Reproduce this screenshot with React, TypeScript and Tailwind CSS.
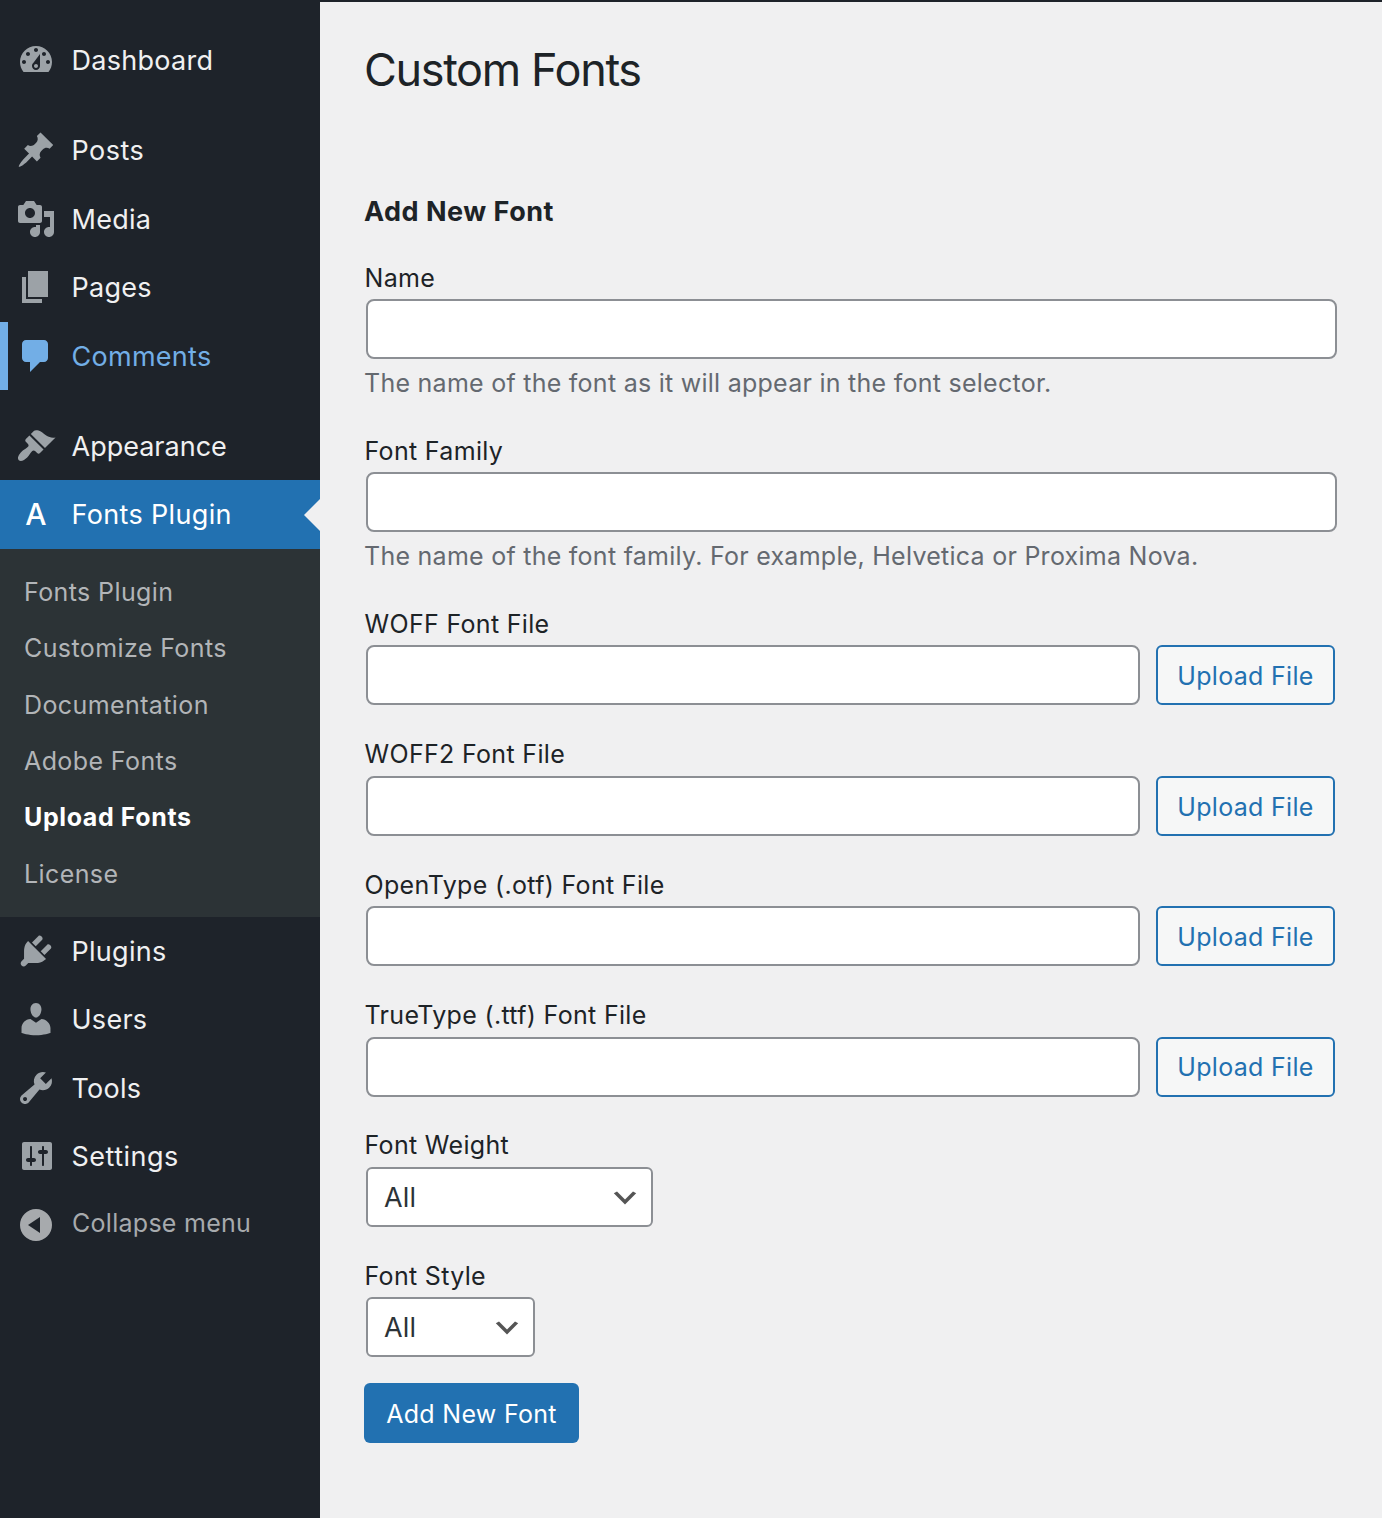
import { useState } from 'react';
import clsx from 'clsx';

interface MenuItem {
  label: string;
  icon: string;
  tracking?: string;
}

const ICONS: Record<string, string> = {
  dashboard: 'M3.76 16h12.48c1.1-1.37 1.76-3.11 1.76-5 0-4.42-3.58-8-8-8s-8 3.58-8 8c0 1.89.66 3.63 1.76 5zM10 4c.55 0 1 .45 1 1s-.45 1-1 1-1-.45-1-1 .45-1 1-1zM6 6c.55 0 1 .45 1 1s-.45 1-1 1-1-.45-1-1 .45-1 1-1zm8 0c.55 0 1 .45 1 1s-.45 1-1 1-1-.45-1-1 .45-1 1-1zm-5.37 5.55L12 7v6c0 1.1-.9 2-2 2s-2-.9-2-2c0-.57.24-1.08.63-1.45zM4 10c.55 0 1 .45 1 1s-.45 1-1 1-1-.45-1-1 .45-1 1-1zm12 0c.55 0 1 .45 1 1s-.45 1-1 1-1-.45-1-1 .45-1 1-1zm-5 3c0-.55-.45-1-1-1s-1 .45-1 1 .45 1 1 1 1-.45 1-1z',
  posts: 'M10.44 3.02l1.82-1.82 6.36 6.35-1.83 1.82c-1.05-.68-2.48-.57-3.41.36l-.75.75c-.92.93-1.04 2.35-.35 3.41l-1.83 1.82-2.41-2.41-2.8 2.79c-.42.42-3.38 2.71-3.8 2.29s1.86-3.39 2.28-3.81l2.79-2.79L4.1 9.36l1.83-1.82c1.05.69 2.48.57 3.4-.36l.75-.75c.93-.92 1.05-2.35.36-3.41z',
  media: 'M13 11V4c0-.55-.45-1-1-1h-1.67L9 1H5L3.67 3H2c-.55 0-1 .45-1 1v7c0 .55.45 1 1 1h10c.55 0 1-.45 1-1zM7 4.5c1.38 0 2.5 1.12 2.5 2.5S8.38 9.5 7 9.5 4.5 8.38 4.5 7 5.62 4.5 7 4.5zM14 6h5v10.5c0 1.38-1.12 2.5-2.5 2.5S14 17.88 14 16.5s1.12-2.5 2.5-2.5c.17 0 .34.02.5.05V9h-3V6zm-4 8.05V13h2v3.5c0 1.38-1.12 2.5-2.5 2.5S7 17.88 7 16.5 8.12 14 9.5 14c.17 0 .34.02.5.05z',
  pages: 'M6 15V2h10v13H6zm-1 1h8v2H3V5h2v11z',
  comments: 'M5 2h9c1.1 0 2 .9 2 2v7c0 1.1-.9 2-2 2h-2l-5 5v-5H5c-1.1 0-2-.9-2-2V4c0-1.1.9-2 2-2z',
  appearance: 'M14.48 11.06L7.41 3.99l1.5-1.5c.5-.56 2.3-.47 3.51.32 1.21.8 1.43 1.28 2.91 2.1 1.18.64 2.45 1.26 4.45.85zm-.71.71L6.7 4.7 4.93 6.47c-.39.39-.39 1.02 0 1.41l1.06 1.06c.39.39.39 1.03 0 1.42-.6.6-1.43 1.11-2.21 1.69-.35.26-.7.53-1.01.84C1.43 14.23.4 16.08 1.4 17.07c.99 1 2.84-.03 4.18-1.36.31-.31.58-.66.85-1.02.57-.78 1.08-1.61 1.69-2.21.39-.39 1.02-.39 1.41 0l1.06 1.06c.39.39 1.02.39 1.41 0z',
  plugins: 'M13.11 4.36L9.87 7.6 8 5.73l3.24-3.24c.35-.34 1.05-.2 1.56.32.52.51.66 1.21.31 1.55zm-8 1.77l.91-1.12 9.01 9.01-1.19.84c-.71.71-2.63 1.16-3.82 1.16H6.14L4.9 17.26c-.59.59-1.54.59-2.12 0-.59-.58-.59-1.53 0-2.12l1.24-1.24v-3.88c0-1.13.4-3.19 1.09-3.89zm7.26 3.97l3.24-3.24c.34-.35 1.04-.21 1.55.31.52.51.66 1.21.31 1.55l-3.24 3.25z',
  users: 'M10 9.25c-2.27 0-2.73-3.44-2.73-3.44C7 4.02 7.82 2 9.97 2c2.16 0 2.98 2.02 2.71 3.81 0 0-.41 3.44-2.68 3.44zm0 2.57L12.72 10c2.39 0 4.52 2.33 4.52 4.53v2.49s-3.65 1.13-7.24 1.13c-3.65 0-7.24-1.13-7.24-1.13v-2.49c0-2.25 1.94-4.48 4.47-4.48z',
  tools: 'M16.68 9.77c-1.34 1.34-3.3 1.67-4.95.99l-5.41 6.52c-.99.99-2.59.99-3.58 0s-.99-2.59 0-3.57l6.52-5.42c-.68-1.65-.35-3.61.99-4.95 1.28-1.28 3.12-1.62 4.72-1.06l-2.89 2.89 2.82 2.82 2.86-2.87c.53 1.58.18 3.39-1.08 4.65zM3.81 16.21c.4.39 1.04.39 1.43 0 .4-.4.4-1.04 0-1.43-.39-.4-1.03-.4-1.43 0-.39.39-.39 1.03 0 1.43z',
  settings: 'M18 16V4c0-.55-.45-1-1-1H4c-.55 0-1 .45-1 1v12c0 .55.45 1 1 1h13c.55 0 1-.45 1-1zM8 11h1c.55 0 1 .45 1 1s-.45 1-1 1H8v1.5c0 .28-.22.5-.5.5s-.5-.22-.5-.5V13H6c-.55 0-1-.45-1-1s.45-1 1-1h1V5.5c0-.28.22-.5.5-.5s.5.22.5.5V11zm5-2h-1c-.55 0-1-.45-1-1s.45-1 1-1h1V5.5c0-.28.22-.5.5-.5s.5.22.5.5V7h1c.55 0 1 .45 1 1s-.45 1-1 1h-1v5.5c0 .28-.22.5-.5.5s-.5-.22-.5-.5V9z',
  collapse: 'M10 2a8 8 0 1 0 0 16 8 8 0 0 0 0-16zM12 6v8l-6-4z',
};

const contentMenu: MenuItem[] = [
  { label: 'Posts', icon: 'posts', tracking: 'tracking-[0.5px]' },
  { label: 'Media', icon: 'media' },
  { label: 'Pages', icon: 'pages' },
  { label: 'Comments', icon: 'comments' },
];

const adminMenu: MenuItem[] = [
  { label: 'Plugins', icon: 'plugins' },
  { label: 'Users', icon: 'users' },
  { label: 'Tools', icon: 'tools' },
  { label: 'Settings', icon: 'settings', tracking: 'tracking-[0.5px]' },
];

const subMenu = ['Fonts Plugin', 'Customize Fonts', 'Documentation', 'Adobe Fonts', 'Upload Fonts', 'License'];

const fileFields = ['WOFF Font File', 'WOFF2 Font File', 'OpenType (.otf) Font File', 'TrueType (.ttf) Font File'];

function Icon({ name }: { name: string }) {
  return (
    <svg viewBox="0 0 20 20" width={40} height={40} fill="currentColor" fillRule="evenodd" className="shrink-0">
      <path d={ICONS[name]} />
    </svg>
  );
}

function MenuLink({ item, active }: { item: MenuItem; active?: boolean }) {
  return (
    <a
      href="#"
      className={clsx(
        'flex h-[68.5px] items-center border-l-8 pl-2',
        active ? 'border-[#72aee6] text-[#72aee6]' : 'border-transparent text-[#f0f0f1]'
      )}
    >
      <span className={active ? 'text-[#72aee6]' : 'text-[#9ca2a7]'}>
        <Icon name={item.icon} />
      </span>
      <span className={clsx('ml-[15.5px] pt-[2px] text-[27px]', item.tracking ?? 'tracking-[0.28px]')}>{item.label}</span>
    </a>
  );
}

function FieldLabel({ children }: { children: React.ReactNode }) {
  return <label className="flex h-11 items-center pl-[0.5px] pt-[2.5px] text-[25px] tracking-[0.32px] text-[#1d2327]">{children}</label>;
}

function TextInput() {
  return (
    <input
      type="text"
      className="ml-0.5 block h-[60px] min-w-0 flex-1 rounded-lg border-2 border-[#8c8f94] bg-white px-4 text-[27px] text-[#2c3338] outline-none"
    />
  );
}

function TextField({ label, help }: { label: string; help: string }) {
  return (
    <div className="mb-[21.2px]">
      <FieldLabel>{label}</FieldLabel>
      <div className="flex">
        <TextInput />
      </div>
      <p className="flex h-12 items-center whitespace-nowrap pt-[2px] text-[25px] tracking-[0.26px] text-[#646970]">{help}</p>
    </div>
  );
}

function FileField({ label }: { label: string }) {
  return (
    <div className="mb-[26.4px]">
      <FieldLabel>{label}</FieldLabel>
      <div className="flex gap-4 pr-0.5">
        <TextInput />
        <button type="button" className="h-[60px] w-[179px] rounded-md border-2 border-[#2271b1] bg-[#f6f7f7] pt-[3.3px] text-[25px] tracking-[0.3px] text-[#2271b1]">
          Upload File
        </button>
      </div>
    </div>
  );
}

function SelectField({ label, className }: { label: string; className: string }) {
  const [value, setValue] = useState('All');

  return (
    <div className={className}>
      <FieldLabel>{label}</FieldLabel>
      <div className="relative ml-0.5">
        <select
          value={value}
          onChange={e => setValue(e.target.value)}
          className="block h-[60px] w-full appearance-none rounded-md border-2 border-[#8c8f94] bg-white pl-4 pt-[2px] text-[27px] tracking-[0.2px] text-[#2c3338] outline-none"
        >
          <option>All</option>
        </select>
        <svg viewBox="0 0 20 20" width={32} height={32} fill="#555" className="pointer-events-none absolute right-3 top-[15px]">
          <path d="M5 6l5 5 5-5 2 1-7 7-7-7 2-1z" />
        </svg>
      </div>
    </div>
  );
}

export default function App() {
  return (
    <div className="flex h-[1518px] w-[1382px] overflow-hidden bg-[#1e232a] font-['Inter',sans-serif]">
      <nav className="flex w-80 shrink-0 flex-col pt-[26px]">
        <MenuLink item={{ label: 'Dashboard', icon: 'dashboard' }} />
        <div className="mt-[21.5px]">
          {contentMenu.map(item => (
            <MenuLink key={item.label} item={item} active={item.label === 'Comments'} />
          ))}
        </div>
        <div className="mt-[21.6px]">
          <MenuLink item={{ label: 'Appearance', icon: 'appearance', tracking: 'tracking-normal' }} />
          <a href="#" className="flex h-[69px] items-center justify-between bg-[#2271b1] pl-4 text-white">
            <span className="w-10 text-center text-[30px] font-medium">A</span>
            <span className="ml-[15.5px] flex-1 pt-[2px] text-[27px] tracking-[0.35px]">Fonts Plugin</span>
            <svg viewBox="0 0 16 32" width={16} height={32} fill="#f0f0f1">
              <path d="M16 0v32L0 16z" />
            </svg>
          </a>
          <ul className="flex h-[367.6px] flex-col bg-[#2c3336] py-[15px]">
            {subMenu.map(label => (
              <li
                key={label}
                className={clsx(
                  'flex flex-1 items-center pl-6 pt-[1.4px] text-[25px]',
                  label === 'Upload Fonts' ? 'font-bold tracking-[0.6px] text-white' : 'tracking-[0.4px] text-[#b2b5b8]'
                )}
              >
                {label}
              </li>
            ))}
          </ul>
          {adminMenu.map(item => (
            <MenuLink key={item.label} item={item} />
          ))}
          <button type="button" className="flex h-[68.4px] items-center pl-4 text-[#a7aaad]">
            <Icon name="collapse" />
            <span className="-mt-0.5 ml-4 text-[25px] tracking-[0.28px]">Collapse menu</span>
          </button>
        </div>
      </nav>

      <main className="mt-0.5 flex-1 bg-[#f0f0f1] pl-11 pr-[45px] text-[#1d2327]">
        <h1 className="pt-10 text-[45px] leading-[56px] tracking-[-1.35px]">Custom Fonts</h1>
        <form onSubmit={e => e.preventDefault()}>
          <h2 className="mt-[94px] mb-[23px] text-[27px] font-bold leading-10 tracking-[0.5px]">Add New Font</h2>
          <TextField label="Name" help="The name of the font as it will appear in the font selector." />
          <TextField label="Font Family" help="The name of the font family. For example, Helvetica or Proxima Nova." />
          {fileFields.map(label => (
            <FileField key={label} label={label} />
          ))}
          <SelectField label="Font Weight" className="mb-[26.4px] w-[289px]" />
          <SelectField label="Font Style" className="w-[171px]" />
          <button type="submit" className="mt-[25.6px] h-[60px] w-[215px] rounded-md bg-[#2271b1] pt-[3px] text-[25px] tracking-[0.3px] text-white">
            Add New Font
          </button>
        </form>
      </main>
    </div>
  );
}
